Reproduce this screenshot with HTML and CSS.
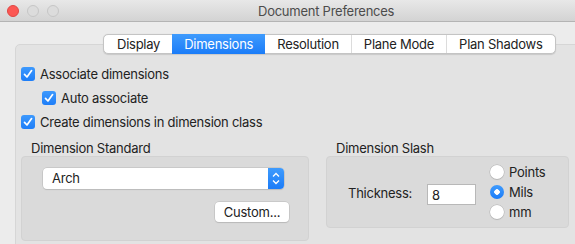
FILE: index.html
```html
<!DOCTYPE html>
<html lang="en">
<head>
    <meta charset="UTF-8">
    <title>Document Preferences</title>
    <link rel="stylesheet" href="styles.css">
</head>
<body>

    <div class="window">
        <div class="titlebar">
            <span class="light red"></span>
            <span class="light"></span>
            <span class="light"></span>
            <span class="title">Document Preferences</span>
        </div>

        <div class="content">
            <div class="tabs">
                <span class="tab">Display</span>
                <span class="tab active">Dimensions</span>
                <span class="tab">Resolution</span>
                <span class="tab">Plane Mode</span>
                <span class="tab">Plan Shadows</span>
            </div>

            <div class="panel">
                <label class="check-row">
                    <span class="checkbox"><svg viewBox="0 0 14 14"><path d="M3.5 7.3 L6 10 L10.6 3.6" /></svg></span>
                    Associate dimensions
                </label>
                <label class="check-row indent">
                    <span class="checkbox"><svg viewBox="0 0 14 14"><path d="M3.5 7.3 L6 10 L10.6 3.6" /></svg></span>
                    Auto associate
                </label>
                <label class="check-row">
                    <span class="checkbox"><svg viewBox="0 0 14 14"><path d="M3.5 7.3 L6 10 L10.6 3.6" /></svg></span>
                    Create dimensions in dimension class
                </label>

                <div class="groups">
                    <div class="group standard">
                        <div class="group-title">Dimension Standard</div>
                        <div class="group-box">
                            <div class="popup">
                                <span class="popup-value">Arch</span>
                                <span class="stepper">
                                    <svg viewBox="0 0 16 21"><path d="M5 8.5 L8 5.5 L11 8.5 M5 12.5 L8 15.5 L11 12.5" /></svg>
                                </span>
                            </div>
                            <div class="button-row">
                                <span class="button">Custom...</span>
                            </div>
                        </div>
                    </div>

                    <div class="group slash">
                        <div class="group-title">Dimension Slash</div>
                        <div class="group-box">
                            <span class="field-label">Thickness:</span>
                            <span class="field">8</span>
                            <div class="radios">
                                <label class="radio-row"><span class="radio"></span>Points</label>
                                <label class="radio-row"><span class="radio on"></span>Mils</label>
                                <label class="radio-row"><span class="radio"></span>mm</label>
                            </div>
                        </div>
                    </div>
                </div>
            </div>
        </div>
    </div>

</body>
</html>
```

FILE: styles.css
```css
body {
    margin: 0;
    font-family: Inter, "Noto Sans", sans-serif;
    font-size: 13px;
    letter-spacing: -0.25px;
    color: #222;
    background-color: #ececec;
    overflow: hidden;
}

.window {
    width: 575px;
    height: 244px;
    overflow: hidden;
    background-color: #ececec;
}

.titlebar {
    height: 21px;
    display: flex;
    align-items: center;
    padding-left: 7px;
    background: linear-gradient(#e8e8e8, #d3d3d3);
    border-bottom: 1px solid #b4b4b4;
}

.light {
    width: 12px;
    height: 12px;
    border-radius: 50%;
    margin-right: 8px;
    background-color: #dcdcdc;
    border: 0.5px solid #c6c6c6;
    box-sizing: border-box;
}

.light.red {
    background-color: #fc5753;
    border-color: #df4744;
}

.title {
    margin-left: 191px;
    color: #4c4c4c;
}

.content {
    padding: 12px 0 0 15px;
}

.tabs {
    position: relative;
    z-index: 1;
    display: flex;
    height: 20px;
    margin-left: 88px;
    margin-bottom: -10px;
    width: max-content;
    background-color: #fff;
    border: 1px solid #c4c4c4;
    border-radius: 5px;
    box-sizing: border-box;
    box-shadow: 0 0.5px 1px rgba(0, 0, 0, 0.12);
}

.tab {
    display: flex;
    align-items: center;
    justify-content: center;
    padding: 0 12px;
    border-left: 1px solid #dcdcdc;
    color: #222;
}

.tab:first-child {
    border-left: none;
    padding-left: 13px;
}

.tab.active {
    background: linear-gradient(#3f9bfd, #1b7cf8);
    color: #fff;
    border-left: none;
    margin: -1px 0;
}

.tab.active + .tab {
    border-left: none;
}

.panel {
    height: 220px;
    margin-right: -20px;
    padding: 17px 0 0 5px;
    background-color: #e3e3e3;
    border: 1px solid #d6d6d6;
    border-radius: 5px 0 0 0;
}

.check-row {
    display: flex;
    align-items: center;
    height: 24px;
    gap: 5px;
}

.check-row.indent {
    padding-left: 21px;
}

.checkbox {
    width: 14px;
    height: 14px;
    border-radius: 3px;
    background: linear-gradient(#3d99fd, #1e7ef8);
    display: flex;
}

.checkbox svg {
    width: 14px;
    height: 14px;
}

.checkbox path {
    fill: none;
    stroke: #fff;
    stroke-width: 1.7;
    stroke-linecap: round;
    stroke-linejoin: round;
}

.groups {
    display: flex;
    gap: 17px;
    margin-top: 6px;
}

.group-title {
    padding-left: 10px;
    height: 16px;
    line-height: 16px;
}

.group-box {
    height: 72px;
    background-color: #dadada;
    border: 1px solid #d2d2d2;
    border-radius: 4px;
}

.standard .group-box {
    width: 243px;
    padding: 11px 22px 0 21px;
}

.popup {
    display: flex;
    height: 21px;
    width: 241px;
    background-color: #fff;
    border-radius: 4px;
    box-shadow: 0 0 0 0.5px #b8b8b8, 0 1px 1px rgba(0, 0, 0, 0.12);
    overflow: hidden;
}

.popup-value {
    flex: 1;
    padding-left: 9px;
    line-height: 21px;
}

.stepper {
    width: 16px;
    background: linear-gradient(#3f9bfd, #1b7cf8);
    display: flex;
}

.stepper svg {
    width: 16px;
    height: 21px;
}

.stepper path {
    fill: none;
    stroke: #fff;
    stroke-width: 1.3;
}

.button-row {
    display: flex;
    justify-content: flex-end;
    margin-top: 13px;
    margin-right: -3px;
}

.button {
    height: 20px;
    line-height: 20px;
    width: 74px;
    text-align: center;
    background-color: #fff;
    border-radius: 4px;
    box-shadow: 0 0 0 0.5px #b8b8b8, 0 1px 1px rgba(0, 0, 0, 0.14);
}

.slash .group-box {
    width: 243px;
    display: flex;
    align-items: center;
    padding-left: 21px;
    box-sizing: border-box;
}

.field-label {
    margin-right: 15px;
    margin-top: 2px;
}

.field {
    width: 49px;
    height: 21px;
    line-height: 21px;
    padding-left: 4px;
    box-sizing: border-box;
    background-color: #fff;
    border: 1px solid #b8b8b8;
    margin-top: 4px;
}

.radios {
    display: flex;
    flex-direction: column;
    margin-left: 14px;
    margin-top: 0;
}

.radio-row {
    display: flex;
    align-items: center;
    height: 20px;
    gap: 5px;
}

.radio {
    width: 14px;
    height: 14px;
    border-radius: 50%;
    background-color: #fff;
    box-shadow: 0 0 0 0.5px #b0b0b0, 0 1px 1px rgba(0, 0, 0, 0.12);
    box-sizing: border-box;
}

.radio.on {
    background: radial-gradient(circle, #fff 0 2.5px, transparent 3px), linear-gradient(#3f9bfd, #1b7cf8);
    box-shadow: none;
}
```
